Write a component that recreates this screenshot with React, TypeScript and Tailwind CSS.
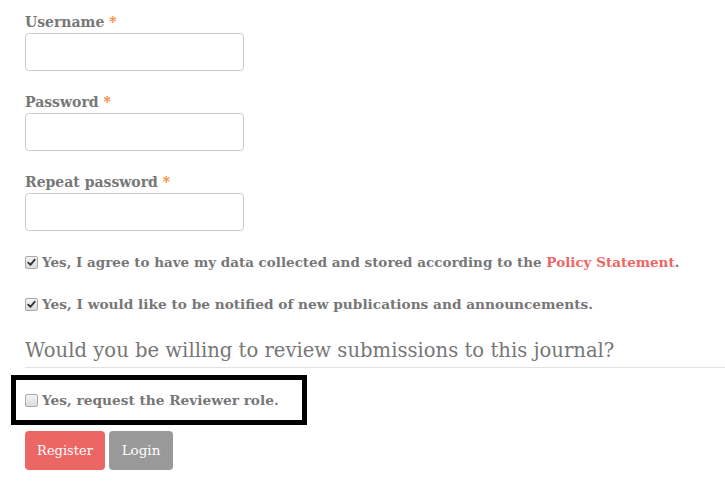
import React from "react";

const font = { fontFamily: '"DejaVu Serif", Georgia, serif' };

function Check({ checked }: { checked: boolean }) {
  return (
    <span className="inline-flex h-[13px] w-[13px] shrink-0 items-center justify-center rounded-[2px] border border-[#a9a9a9] bg-gradient-to-b from-[#f4f4f4] to-[#dcdcdc]">
      {checked && (
        <svg width="9" height="9" viewBox="0 0 9 9">
          <path d="M1.2 4.6 L3.4 6.8 L7.8 1.6" fill="none" stroke="#333" strokeWidth="1.8" strokeLinecap="round" strokeLinejoin="round" />
        </svg>
      )}
    </span>
  );
}

function Field({ label }: { label: string }) {
  return (
    <div className="mb-[20px]">
      <div className="mb-[2px] h-[20px] pt-[1px] text-[14px] font-bold leading-[20px] text-[#777]">
        {label} <span className="text-[#f58a3b]">*</span>
      </div>
      <div className="h-[38px] w-[219px] rounded-[4px] border border-[#ccc] bg-white" />
    </div>
  );
}

export default function App() {
  return (
    <div className="min-h-[485px] w-[725px] bg-white pt-[11px]" style={font}>
      <div className="pl-[25px]">
        <Field label="Username" />
        <Field label="Password" />
        <Field label="Repeat password" />
        <div className="mt-[21px] flex h-[20px] items-center gap-[4px] text-[13.5px] font-bold text-[#777]">
          <Check checked />
          <span>
            Yes, I agree to have my data collected and stored according to the{" "}
            <span className="text-[#ec6664]">Policy Statement</span>.
          </span>
        </div>
        <div className="mt-[22px] flex h-[20px] items-center gap-[4px] text-[13.7px] font-bold text-[#777]">
          <Check checked />
          <span>Yes, I would like to be notified of new publications and announcements.</span>
        </div>
        <div className="mt-[22px] h-[32px] border-b border-[#e2e2e2] text-[19.6px] leading-[30px] text-[#777]">
          Would you be willing to review submissions to this journal?
        </div>
        <div className="ml-[-14px] mt-[7px] flex h-[50px] w-[296px] items-center gap-[4px] border-[5px] border-black pl-[9px] text-[13.7px] font-bold text-[#777]">
          <Check checked={false} />
          <span>Yes, request the Reviewer role.</span>
        </div>
        <div className="mt-[6px] flex gap-[4px]">
          <button className="h-[39px] w-[80px] rounded-[4px] bg-[#ec6664] text-[13px] text-white">Register</button>
          <button className="h-[39px] w-[64px] rounded-[4px] bg-[#999] text-[13.5px] text-white">Login</button>
        </div>
      </div>
    </div>
  );
}
